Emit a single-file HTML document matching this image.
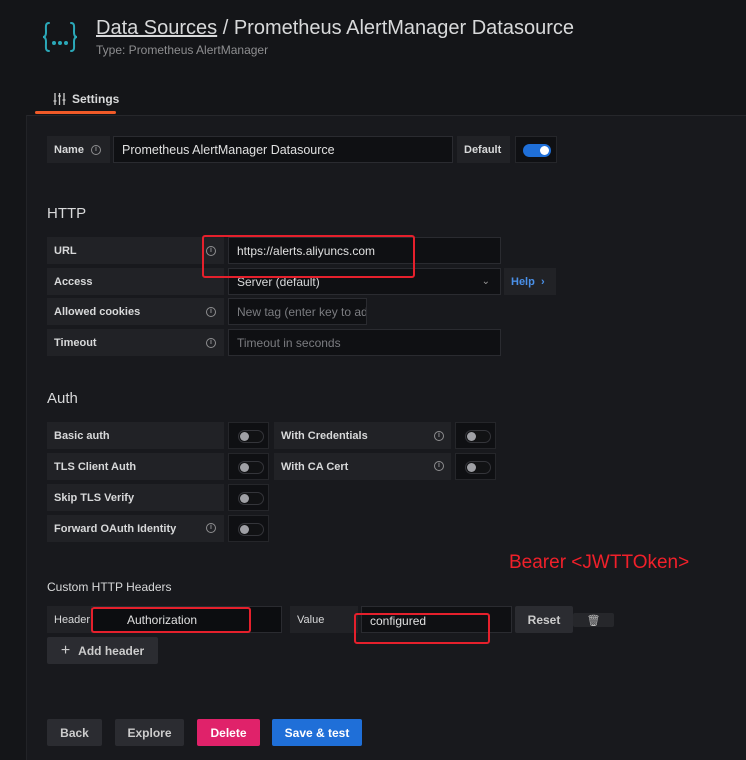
<!DOCTYPE html>
<html><head><meta charset="utf-8"><style>
*{box-sizing:border-box;margin:0;padding:0}
body{width:746px;height:760px;background:#141518;font-family:"Liberation Sans",sans-serif;position:relative;overflow:hidden;color:#d8d9da}
.a{position:absolute}
.panel{left:26px;top:115px;width:720px;height:645px;background:#18191d;border-top:1px solid #26272b;border-left:1px solid #222327}
.lbl{background:#212226;font-size:11px;font-weight:bold;color:#d8d9da;padding-left:7px;display:flex;align-items:center;height:27px}
.inp{background:#0f1013;border:1px solid #2a2b30;font-size:12px;color:#e0e0e0;padding-left:8px;display:flex;align-items:center;height:27px}
.ph{color:#7b7c80}
.info{position:absolute;width:10px;height:10px;border:1px solid #8e8e90;border-radius:50%;font-size:7px;color:#8e8e90;text-align:center;line-height:8px;font-weight:bold}
.tb{background:#0f1013;border:1px solid #25262a;height:27px}
.tg{position:absolute;left:9px;top:7px;width:26px;height:13px;border:1px solid #34353a;border-radius:8px;background:#111214}
.tg::after{content:"";position:absolute;left:1px;top:1px;width:9px;height:9px;border-radius:50%;background:#9fa0a5}
.h{font-size:15px;color:#d8d9da}
.btn{font-size:12px;font-weight:bold;display:flex;align-items:center;justify-content:center;height:27px;border-radius:2px}
.red{border:2px solid #e5202c;border-radius:3px}
</style></head><body>
<svg class="a" style="left:42px;top:22px" width="36" height="30" viewBox="0 0 36 30" fill="none" stroke="#2ba8b8" stroke-width="2" stroke-linecap="round"><path d="M7 1C3 1 4 5 4 10C4 13 3 15 1 15C3 15 4 17 4 20C4 25 3 29 7 29M29 1C33 1 32 5 32 10C32 13 33 15 35 15C33 15 32 17 32 20C32 25 33 29 29 29"/><circle cx="12" cy="21" r="1" fill="#2ba8b8"/><circle cx="18" cy="21" r="1" fill="#2ba8b8"/><circle cx="24" cy="21" r="1" fill="#2ba8b8"/></svg>
<div class="a" style="left:96px;top:17px;font-size:20px;color:#d8d9da;white-space:nowrap"><span style="text-decoration:underline">Data Sources</span> / Prometheus AlertManager Datasource</div>
<div class="a" style="left:96px;top:43px;font-size:12px;color:#8e8e90">Type: Prometheus AlertManager</div>
<svg class="a" style="left:53px;top:93px" width="13" height="12" viewBox="0 0 13 12" fill="none" stroke="#ccc" stroke-width="1.3"><path d="M2 0v12M6.5 0v12M11 0v12M0.5 8h3M5 3h3M9.5 7h3"/></svg>
<div class="a" style="left:72px;top:92px;font-size:12px;font-weight:bold;color:#d8d9da">Settings</div>
<div class="a panel"></div>
<div class="a" style="left:35px;top:111px;width:81px;height:3px;background:#f05a28;border-radius:2px"></div>

<div class="a lbl" style="left:47px;top:136px;width:63px">Name</div><div class="info" style="left:91px;top:145px">i</div>
<div class="a inp" style="left:113px;top:136px;width:340px;font-size:12.5px">Prometheus AlertManager Datasource</div>
<div class="a lbl" style="left:457px;top:136px;width:53px">Default</div>
<div class="a tb" style="left:515px;top:136px;width:42px"><div style="position:absolute;left:7px;top:7px;width:28px;height:13px;border-radius:8px;background:#1f6fd8"><div style="position:absolute;right:2px;top:2px;width:9px;height:9px;border-radius:50%;background:#fff"></div></div></div>

<div class="a h" style="left:47px;top:205px">HTTP</div>
<div class="a lbl" style="left:47px;top:237px;width:177px">URL</div><div class="info" style="left:206px;top:246px">i</div>
<div class="a inp" style="left:228px;top:237px;width:273px">https://alerts.aliyuncs.com</div>
<div class="a lbl" style="left:47px;top:268px;width:177px">Access</div>
<div class="a inp" style="left:228px;top:268px;width:273px;color:#d8d9da">Server (default)<span style="position:absolute;right:10px;font-size:10px;color:#999">⌄</span></div>
<div class="a lbl" style="left:504px;top:268px;width:52px;color:#4a90e8">Help &nbsp;›</div>
<div class="a lbl" style="left:47px;top:298px;width:177px">Allowed cookies</div><div class="info" style="left:206px;top:307px">i</div>
<div class="a inp ph" style="left:228px;top:298px;width:139px;overflow:hidden;white-space:nowrap">New tag (enter key to ad</div>
<div class="a lbl" style="left:47px;top:329px;width:177px">Timeout</div><div class="info" style="left:206px;top:338px">i</div>
<div class="a inp ph" style="left:228px;top:329px;width:273px">Timeout in seconds</div>

<div class="a h" style="left:47px;top:390px">Auth</div>
<div class="a lbl" style="left:47px;top:422px;width:177px">Basic auth</div>
<div class="a tb" style="left:228px;top:422px;width:41px"><div class="tg"></div></div>
<div class="a lbl" style="left:274px;top:422px;width:177px">With Credentials</div><div class="info" style="left:434px;top:431px">i</div>
<div class="a tb" style="left:455px;top:422px;width:41px"><div class="tg"></div></div>
<div class="a lbl" style="left:47px;top:453px;width:177px">TLS Client Auth</div>
<div class="a tb" style="left:228px;top:453px;width:41px"><div class="tg"></div></div>
<div class="a lbl" style="left:274px;top:453px;width:177px">With CA Cert</div><div class="info" style="left:434px;top:461px">i</div>
<div class="a tb" style="left:455px;top:453px;width:41px"><div class="tg"></div></div>
<div class="a lbl" style="left:47px;top:484px;width:177px">Skip TLS Verify</div>
<div class="a tb" style="left:228px;top:484px;width:41px"><div class="tg"></div></div>
<div class="a lbl" style="left:47px;top:515px;width:177px">Forward OAuth Identity</div><div class="info" style="left:206px;top:523px">i</div>
<div class="a tb" style="left:228px;top:515px;width:41px"><div class="tg"></div></div>

<div class="a" style="left:509px;top:552px;font-size:19px;color:#f0202a">Bearer &lt;JWTTOken&gt;</div>
<div class="a" style="left:47px;top:580px;font-size:12px;color:#d8d9da">Custom HTTP Headers</div>
<div class="a lbl" style="left:47px;top:606px;width:44px;font-weight:normal">Header</div>
<div class="a inp" style="left:91px;top:606px;width:191px;padding-left:35px;background:#0c0d10">Authorization</div>
<div class="a lbl" style="left:290px;top:606px;width:68px;font-weight:normal">Value</div>
<div class="a inp" style="left:361px;top:606px;width:151px;align-items:flex-start;padding-top:7px">configured</div>
<div class="a btn" style="left:515px;top:606px;width:58px;background:#2b2c31;color:#ccc">Reset</div>
<div class="a btn" style="left:573px;top:613px;width:41px;height:14px;background:#26272b;color:#bbb;font-size:11px;font-weight:normal">🗑</div>
<div class="a btn" style="left:47px;top:637px;width:111px;background:#2b2c31;color:#ccc"><span style="font-size:16px;font-weight:normal;margin-right:8px">+</span>Add header</div>

<div class="a btn" style="left:47px;top:719px;width:55px;background:#2b2c31;color:#ccc">Back</div>
<div class="a btn" style="left:115px;top:719px;width:69px;background:#2b2c31;color:#ccc">Explore</div>
<div class="a btn" style="left:197px;top:719px;width:63px;background:#e0226a;color:#fff">Delete</div>
<div class="a btn" style="left:272px;top:719px;width:90px;background:#1f6fd8;color:#fff">Save &amp; test</div>

<div class="a red" style="left:202px;top:235px;width:213px;height:43px"></div>
<div class="a red" style="left:91px;top:607px;width:160px;height:26px"></div>
<div class="a red" style="left:354px;top:613px;width:136px;height:31px"></div>
</body></html>
